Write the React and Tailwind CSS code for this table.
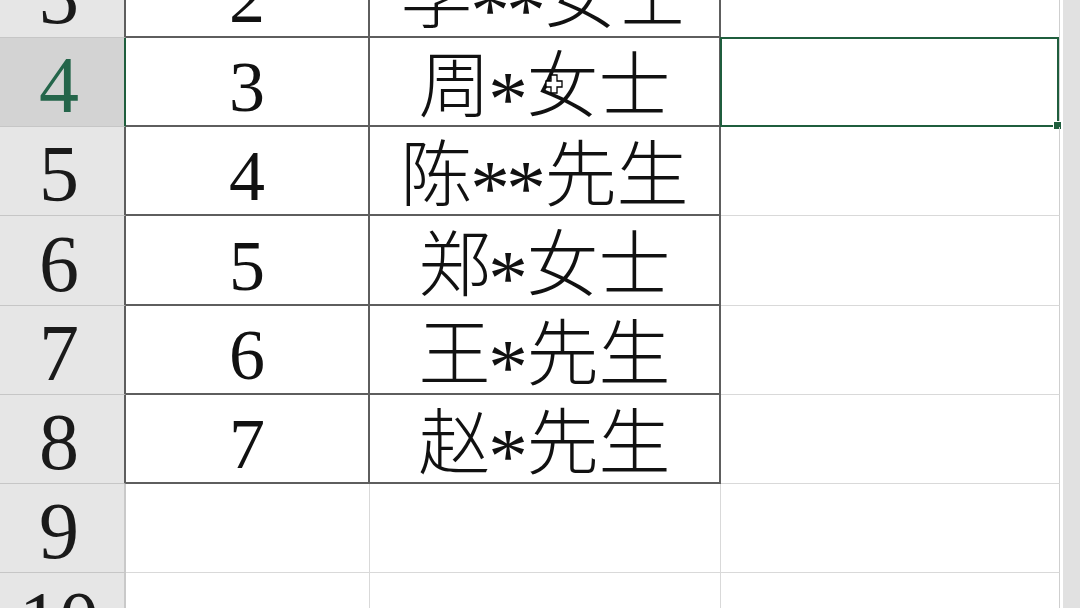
import React from "react";

const rows = [
  { n: "3", b: "2", c: "李**女士", h: "h-[89px]", table: true },
  { n: "4", b: "3", c: "周*女士", h: "h-[89px]", table: true, selected: true },
  { n: "5", b: "4", c: "陈**先生", h: "h-[89px]", table: true },
  { n: "6", b: "5", c: "郑*女士", h: "h-[90px]", table: true },
  { n: "7", b: "6", c: "王*先生", h: "h-[89px]", table: true },
  { n: "8", b: "7", c: "赵*先生", h: "h-[89px]", table: true },
  { n: "9", b: "", c: "", h: "h-[89px]" },
  { n: "10", b: "", c: "", h: "h-[89px]" },
];

const cellFont = {
  fontFamily: '"Liberation Serif", "Noto Sans CJK SC", serif',
};

// asterisks sit on the middle line like in SimSun
const Name = ({ text }) => (
  <span>
    {text.split("").map((ch, i) =>
      ch === "*" ? (
        <span key={i} className="inline-block translate-y-[12px] scale-110">
          *
        </span>
      ) : (
        <span key={i}>{ch}</span>
      )
    )}
  </span>
);

const Row = ({ row }) => {
  const headBorder = row.selected
    ? "border-r-2 border-r-[#1f5e3d] bg-[#d3d3d3] text-[#24654a]"
    : row.table
    ? "border-r-2 border-r-[#5e5e5e] bg-[#e6e6e6] text-[#1a1a1a]"
    : "border-r-2 border-r-[#c9c9c9] bg-[#e6e6e6] text-[#1a1a1a]";
  const tableCell = row.table
    ? "border-r-2 border-r-[#5e5e5e] border-b-2 border-b-[#5e5e5e]"
    : "border-r border-r-[#d9d9d9] border-b border-b-[#d9d9d9]";

  return (
    <div className={`flex ${row.h} shrink-0`}>
      <div
        className={`w-[126px] shrink-0 flex items-end justify-center pb-[1px] border-b border-b-[#c6c6c6] text-[80px] leading-none ${headBorder}`}
        style={cellFont}
      >
        <span className="pr-[6px]">{row.n}</span>
      </div>
      <div
        className={`w-[244px] shrink-0 flex items-end justify-center pb-[2px] text-[72px] leading-none text-[#111] ${tableCell}`}
        style={cellFont}
      >
        {row.b}
      </div>
      <div
        className={`w-[351px] shrink-0 flex items-end justify-center pb-[2px] text-[72px] leading-none font-light text-[#111] ${tableCell}`}
        style={cellFont}
      >
        <Name text={row.c} />
      </div>
      <div className="relative flex-1 border-r border-r-[#cfcfcf] border-b border-b-[#d9d9d9]">
        {row.selected && (
          <div className="absolute -top-[1px] -left-[1px] right-0 -bottom-[1px] border-2 border-[#1f5e3d]">
            <div className="absolute -right-[4px] -bottom-[4px] w-[7px] h-[7px] bg-[#1f5e3d] outline outline-1 outline-white" />
          </div>
        )}
      </div>
    </div>
  );
};

export default function App() {
  return (
    <div className="relative w-[1080px] h-[608px] overflow-hidden bg-white flex">
      <div className="w-[1060px] shrink-0 flex flex-col -mt-[51px]">
        {rows.map((row) => (
          <Row key={row.n} row={row} />
        ))}
      </div>
      <div className="flex-1 border-l-[3px] border-l-white bg-[#e1e1e1]" />

      {/* excel cell cursor */}
      <svg
        className="absolute left-[545px] top-[74px]"
        width="18"
        height="20"
        viewBox="0 0 18 20"
      >
        <path
          d="M6 1h6v6h5v6h-5v6H6v-6H1V7h5z"
          fill="#fff"
          stroke="#000"
          strokeWidth="1.3"
        />
      </svg>
    </div>
  );
}
